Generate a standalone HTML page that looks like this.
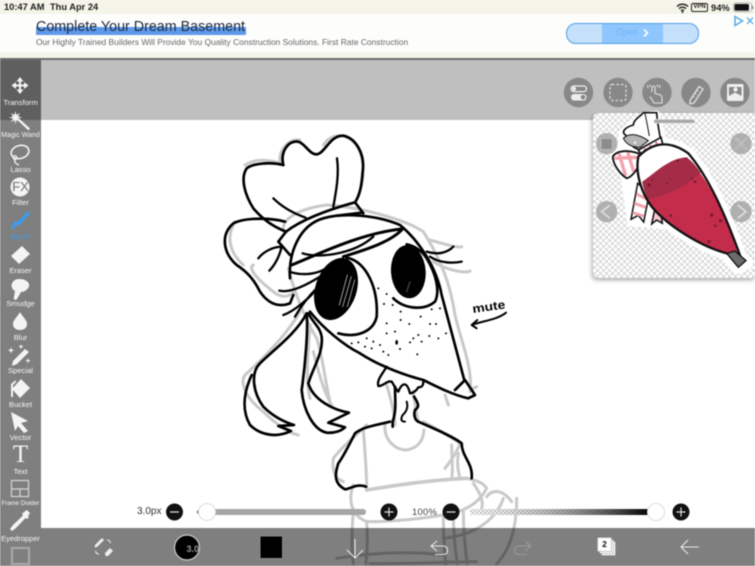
<!DOCTYPE html>
<html><head><meta charset="utf-8">
<style>
html,body{margin:0;padding:0;width:755px;height:566px;overflow:hidden;background:#fff;font-family:"Liberation Sans",sans-serif}
.a{position:absolute}
#root{position:absolute;left:0;top:0;width:755px;height:566px;overflow:hidden;filter:blur(.45px)}
.lb{position:absolute;left:0;width:41px;text-align:center;color:#f4f4f4;font-size:7.6px;line-height:9px;white-space:nowrap}
.check{background-color:#fff;background-image:conic-gradient(#dcdcdc 25%,#fff 0 50%,#dcdcdc 0 75%,#fff 0);background-size:6px 6px}
</style></head><body>
<div id="root">
<!-- status -->
<div class="a" style="left:0;top:0;width:755px;height:14px;background:#f4f4e8"></div>
<div class="a" style="left:4px;top:2px;font-size:9.300px;line-height:11px;color:#222;font-weight:bold;white-space:nowrap">10:47 AM</div>
<div class="a" style="left:50px;top:2px;font-size:9.300px;line-height:11px;color:#222;font-weight:bold;white-space:nowrap">Thu Apr 24</div>
<div class="a" style="left:711px;top:2px;font-size:9.400px;line-height:11px;color:#222;font-weight:bold">94%</div>
<div class="a" style="left:691px;top:3px;width:15px;height:7px;border:1px solid #222;border-radius:2px;font-size:6px;line-height:7px;text-align:center;color:#222;font-weight:bold">VPN</div>
<svg class="a" style="left:676px;top:2px" width="79" height="12" viewBox="0 0 79 12">
<path d="M1 4.500C4 1.500 9 1.500 12 4.500M3 6.600C5 4.700 8 4.700 10 6.600M5 8.600C6 7.700 7 7.700 8 8.600" stroke="#222" stroke-width="1.400" fill="none"/><circle cx="6.500" cy="10" r="1" fill="#222"/>
<rect x="57.500" y="1" width="18" height="8.600" rx="2.400" fill="#fff" stroke="#999" stroke-width=".8"/><rect x="58.500" y="2" width="14.500" height="6.600" rx="1.400" fill="#111"/><rect x="76" y="4" width="1.200" height="3" fill="#888"/>
</svg>
<!-- ad -->
<div class="a" style="left:0;top:14px;width:755px;height:38px;background:#fdfdfc"></div>
<div class="a" style="left:0;top:52px;width:755px;height:6px;background:#f4f4e8"></div>
<div class="a" style="left:0;top:58px;width:755px;height:2px;background:#6b6b6b"></div>
<div class="a" style="left:36px;top:27px;width:210px;height:8px;background:#5f98ea"></div>
<div class="a" style="left:36px;top:19px;font-size:14.300px;line-height:17px;color:#1d2a3c;white-space:nowrap">Complete Your Dream Basement</div>
<div class="a" style="left:36px;top:37px;font-size:8.430px;line-height:11px;color:#666;white-space:nowrap">Our Highly Trained Builders Will Provide You Quality Construction Solutions. First Rate Construction</div>
<div class="a" style="left:566px;top:23px;width:131px;height:19px;border:1px solid #4f9fe8;border-radius:10px;background:#c4e0fb"></div>
<div class="a" style="left:602px;top:24px;width:61px;height:19px;background:#8ec6fd"></div>
<div class="a" style="left:616px;top:27px;font-size:9px;line-height:11px;color:#70b4fb">Open</div>
<svg class="a" style="left:642px;top:28px" width="8" height="10"><path d="M2 1.500L5.500 5L2 8.500" stroke="#fff" stroke-width="1.600" fill="none"/></svg>
<svg class="a" style="left:733px;top:14px" width="22" height="14"><path d="M2 2.500L2 11.500L9.500 7Z" fill="none" stroke="#59aeea" stroke-width="1.600"/><path d="M14 3.500L20 10M20 3.500L14 10" stroke="#4ca4e4" stroke-width="1.200"/></svg>
<!-- canvas -->
<div class="a" style="left:0;top:60px;width:755px;height:60px;background:#bfbfbf"></div>
<svg class="a" style="left:0;top:0" width="755" height="566" viewBox="0 0 755 566">
<g transform="translate(210,125) scale(.33333)" fill="none" stroke-linecap="round" stroke-linejoin="round">
<!-- gray sketch -->
<g stroke="#c9c9c9" stroke-width="9">
<path d="M210 115C205 70 240 40 270 45M340 60C360 30 400 20 430 50C470 90 465 170 440 225"/>
<path d="M105 120C140 100 170 105 205 112"/>
<path d="M220 310C220 280 270 250 350 240C440 245 580 280 640 320C690 400 720 470 735 570C750 640 790 730 780 800"/>
<path d="M75 290C50 330 55 380 100 420M130 420C110 430 150 470 190 500C220 525 245 510 250 500"/>
<path d="M660 345C710 360 750 370 755 365M670 410C720 440 770 445 780 438"/>
<path d="M235 430C255 510 290 590 320 640C340 700 345 770 360 830"/>
<path d="M270 560C230 630 160 700 105 750C85 780 120 830 160 860C200 900 240 925 265 930"/>
<path d="M300 600C295 680 285 760 300 820"/>
<path d="M310 680C320 720 340 800 365 840"/>
<path d="M705 810L715 840M790 790L800 785"/>
<path d="M530 780C545 830 555 870 555 900M610 800C615 840 620 870 625 890"/>
<path d="M525 895C520 950 560 975 590 975C620 970 640 950 642 915"/>
<path d="M470 900C440 930 400 960 370 1000C365 1040 375 1060 400 1070"/>
<path d="M460 915C465 980 470 1040 470 1090"/>
<path d="M640 890C680 910 720 935 750 955C740 985 720 1010 705 1030M725 960C725 1000 730 1040 725 1060M745 985C740 1020 745 1040 750 1060"/>
<path d="M470 1095C560 1080 660 1065 770 1060" stroke-width="11"/>
<path d="M430 1080C415 1120 420 1170 470 1190C560 1190 640 1180 700 1170C770 1160 810 1130 830 1090C820 1070 790 1065 770 1060"/>
<path d="M790 1075C815 1110 820 1135 815 1150M830 1115C850 1090 880 1095 905 1130"/>
<path d="M430 1160C425 1220 425 1280 430 1316M470 1190C475 1250 470 1290 468 1316"/>
<path d="M700 1170C700 1250 705 1290 707 1316M730 1160C730 1240 738 1290 742 1316M760 1155C760 1240 768 1290 772 1316"/>
<path d="M700 1240C800 1230 860 1180 880 1120M920 1120C920 1200 905 1270 860 1316"/>
<path d="M380 1300C500 1280 620 1280 700 1290M800 1310C720 1310 620 1316 480 1316"/>
</g>
<!-- black lines -->
<g stroke="#000" stroke-width="8">
<path d="M220 120C180 110 130 115 110 130C90 160 105 210 130 250C160 285 190 305 228 320"/>
<path d="M220 120C210 80 235 45 265 50C285 55 300 90 320 88C345 85 360 30 400 32C440 40 465 90 458 140C455 180 450 210 435 232"/>
<path d="M381 100C388 150 378 200 370 245" stroke-width="7"/>
<path d="M190 220C215 245 250 265 287 278" stroke-width="7"/>
<path d="M205 350L228 320C280 280 370 250 435 232L460 265M205 350L240 390"/>
<path d="M380 272L455 263"/>
<path d="M240 460C235 380 270 300 340 280C400 262 500 270 570 300C630 350 680 430 695 510L762 762"/>
<path d="M245 420C320 390 450 325 575 312" stroke-width="9"/>
<path d="M278 385C320 400 430 390 490 335" stroke-width="7"/>
<path d="M575 315C540 350 480 370 400 395" stroke-width="9"/>
<path d="M245 442C280 452 320 447 345 432" stroke-width="7"/>
<path d="M410 398C470 410 505 490 500 575C490 620 440 640 385 625"/>
<path d="M550 520C580 550 640 560 675 530C690 500 680 450 650 400C635 375 610 362 590 358"/>
<path d="M650 380C680 390 710 385 730 365M660 395C690 415 730 415 755 410" stroke-width="7"/>
<path d="M208 497C240 505 290 480 330 455M220 570C250 560 300 520 330 480M255 575C275 540 300 510 320 490" stroke-width="7"/>
<path d="M225 290C190 280 110 275 70 295C30 330 40 385 80 420C110 440 130 460 150 500C170 530 200 550 240 535L250 510"/>
<path d="M145 400C160 380 190 365 215 365M178 437C195 420 210 390 215 365" stroke-width="7"/>
<path d="M290 565C260 625 190 675 150 715C120 745 130 805 160 845C190 875 220 890 252 900L205 903L243 918C200 940 150 930 120 900C100 865 95 815 125 750"/>
<path d="M290 565C295 615 285 725 275 795C280 855 310 915 350 923C375 925 395 917 405 907L355 893L417 863C370 855 310 825 295 775C310 725 340 685 335 635C330 605 310 595 295 565"/>
<path d="M300 560C340 610 400 660 450 685C520 730 600 755 640 765C680 785 730 810 775 820L795 810L765 765L735 795"/>
<path d="M530 725C515 750 500 765 505 783C520 785 530 765 545 770C555 785 555 790 565 800C575 775 590 765 600 805C610 805 620 795 625 787C635 787 640 783 640 770" stroke-width="7"/>
<path d="M555 785C555 825 560 855 548 890L548 905"/>
<path d="M612 815C625 835 630 845 615 855C610 870 615 885 625 890"/>
<path d="M590 830C595 845 590 860 578 870C570 885 575 890 585 890" stroke-width="6"/>
<path d="M540 890C500 900 460 905 435 925C420 955 400 995 385 1015C375 1045 370 1075 405 1093C425 1090 440 1075 468 1085"/>
<path d="M625 890C670 910 730 935 755 955C755 995 790 1015 785 1060"/>
<path d="M888 563C860 585 820 587 785 600L800 610M785 600L802 585" stroke-width="6"/>
<ellipse cx="378" cy="492" rx="62" ry="96" transform="rotate(18 378 492)" fill="#000" stroke="none"/>
<ellipse cx="595" cy="440" rx="52" ry="80" transform="rotate(-4 595 440)" fill="#000" stroke="none"/>
<path d="M412 450L388 540M424 455L398 545M434 465L412 545" stroke="#9a9a9a" stroke-width="3"/>
<path d="M600 470L590 500" stroke="#555" stroke-width="3"/>
</g>
<g fill="#000" stroke="none">
<circle cx="505" cy="490" r="3"/><circle cx="530" cy="507" r="3"/><circle cx="522" cy="537" r="3"/><circle cx="548" cy="540" r="3"/><circle cx="572" cy="560" r="3"/><circle cx="530" cy="595" r="3"/><circle cx="572" cy="585" r="3"/><circle cx="598" cy="597" r="3"/><circle cx="632" cy="575" r="3"/><circle cx="660" cy="597" r="3"/><circle cx="678" cy="597" r="3"/><circle cx="708" cy="625" r="3"/><circle cx="555" cy="620" r="3"/><circle cx="530" cy="625" r="3"/><circle cx="625" cy="630" r="3"/><circle cx="658" cy="633" r="3"/><circle cx="685" cy="640" r="3"/><circle cx="610" cy="640" r="3"/><ellipse cx="560" cy="652" rx="4" ry="7"/><circle cx="600" cy="652" r="3"/><circle cx="635" cy="650" r="3"/><circle cx="510" cy="660" r="3"/><circle cx="490" cy="650" r="3"/><circle cx="470" cy="640" r="3"/><circle cx="425" cy="655" r="3"/><circle cx="445" cy="652" r="3"/><circle cx="465" cy="665" r="3"/><circle cx="485" cy="670" r="3"/><circle cx="520" cy="680" r="3"/><circle cx="570" cy="672" r="3"/><circle cx="535" cy="690" r="3"/><circle cx="622" cy="688" r="3"/><circle cx="690" cy="550" r="3"/><circle cx="665" cy="553" r="3"/>
</g>
</g>
<text x="473" y="313" transform="rotate(-8 473 313)" font-family="Liberation Sans,sans-serif" font-weight="bold" font-size="12" fill="#000" textLength="33" lengthAdjust="spacingAndGlyphs">mute</text>
</svg>
<!-- sliders -->
<div class="a" style="left:137px;top:506px;font-size:10px;line-height:12px;color:#333">3.0px</div>
<div class="a" style="left:412px;top:506px;font-size:9.400px;line-height:12px;color:#444;letter-spacing:.3px">100%</div>
<svg class="a" style="left:0;top:500px" width="755" height="24">
<defs><linearGradient id="g1" x1="0" x2="1"><stop offset="0" stop-color="#fff" stop-opacity=".3"/><stop offset="1" stop-color="#000"/></linearGradient>
<pattern id="ck" width="4" height="4" patternUnits="userSpaceOnUse"><rect width="4" height="4" fill="#fff"/><rect width="2" height="2" fill="#aaa"/><rect x="2" y="2" width="2" height="2" fill="#aaa"/></pattern></defs>
<rect x="210" y="9" width="156" height="6" rx="3" fill="#a6a6a6"/>
<rect x="197" y="10" width="6" height="4" rx="2" fill="#2a5a78"/>
<rect x="470" y="9" width="180" height="6" fill="url(#ck)"/><rect x="470" y="9" width="180" height="6" fill="url(#g1)"/>
<circle cx="207" cy="12" r="8.500" fill="#fff" stroke="#ddd"/>
<circle cx="656" cy="12" r="8.500" fill="#fff" stroke="#ddd"/>
<g fill="#111"><circle cx="174.500" cy="12" r="8.500"/><circle cx="389" cy="12" r="8.500"/><circle cx="451" cy="12" r="8.500"/><circle cx="681" cy="12" r="8.500"/></g>
<path d="M170 12h9M446.500 12h9M384.500 12h9M389 7.500v9M676.500 12h9M681 7.500v9" stroke="#ddd" stroke-width="1.200"/>
</svg>
<!-- thumbnail panel -->
<div class="a check" style="left:593px;top:113px;width:162px;height:165px;border-radius:5px 0 0 5px;box-shadow:-1px 2px 4px rgba(0,0,0,.35)"></div>
<svg class="a" style="left:555px;top:70px" width="200" height="215" viewBox="0 0 600 645">
<!-- halo -->
<path d="M250 260C300 210 350 215 400 250C460 320 510 430 560 570L575 580L545 592L515 550C440 530 340 470 290 410C260 370 240 310 250 260Z" fill="#fff" stroke="#fff" stroke-width="38" stroke-linejoin="round"/>
<path d="M200 185C215 170 240 160 262 135L305 130L325 205L330 470L225 460L205 325L172 260L195 240Z" fill="#fff" stroke="#fff" stroke-width="16" stroke-linejoin="round"/>
<!-- top frills -->
<path d="M212 195C195 185 215 170 235 165C235 150 255 140 265 128L305 128C307 160 312 180 316 205L255 240C235 235 215 215 212 195Z" fill="#fff" stroke="#111" stroke-width="5"/>
<path d="M270 130C275 155 280 180 283 198" stroke="#111" stroke-width="3" fill="none"/>
<path d="M205 205C225 185 255 195 280 212L255 232C235 232 215 225 205 205Z" fill="#b5b5b5" stroke="#111" stroke-width="3"/>
<circle cx="240" cy="218" r="4" fill="#eee"/>
<!-- ribbon tails -->
<path d="M248 340L228 448L250 436L266 456L283 370Z" fill="#fff" stroke="#111" stroke-width="4.500"/>
<path d="M244 372L278 388M238 400L272 412M233 428L266 438" stroke="#f4a3ae" stroke-width="9"/>
<path d="M302 405L290 462L305 450L322 460L318 430Z" fill="#f9c6cd" stroke="#111" stroke-width="4.500"/>
<!-- bow -->
<path d="M250 250C220 240 185 240 173 260C175 285 195 312 215 325C235 320 250 290 262 270Z" fill="#fff" stroke="#111" stroke-width="5"/>
<path d="M192 250L212 318M218 246L236 305M178 265L248 262" stroke="#f4a3ae" stroke-width="10" fill="none"/>
<path d="M173 260C175 285 195 312 215 325C235 320 250 290 262 270M250 250C220 240 185 240 173 260" stroke="#111" stroke-width="5" fill="none"/>
<path d="M250 240L318 202L323 222L262 258Z" fill="#fff" stroke="#111" stroke-width="5"/>
<path d="M268 235L276 250M285 225L293 240M302 215L310 230" stroke="#ee8092" stroke-width="7"/>
<!-- bag -->
<path d="M250 260C300 210 350 215 400 250C460 320 510 430 560 570L515 550C440 530 340 470 290 410C260 370 240 310 250 260Z" fill="#fff"/>
<path d="M262 335C300 310 340 265 395 262C460 325 510 430 552 560L518 548C440 530 340 470 290 410C275 385 265 360 262 335Z" fill="#c32c4a"/>
<path d="M262 335C300 310 340 265 395 262C410 272 425 290 437 308C400 345 340 375 278 388C270 370 265 352 262 335Z" fill="#a42c47"/>
<path d="M250 260C300 210 350 215 400 250C460 320 510 430 560 570L515 550C440 530 340 470 290 410C260 370 240 310 250 260Z" fill="none" stroke="#111" stroke-width="7"/>
<path d="M515 550L540 543L573 572L550 592Z" fill="#6b6b6b" stroke="#111" stroke-width="4"/>
<g fill="#7a1a30"><circle cx="282" cy="345" r="5"/><circle cx="292" cy="330" r="3"/><circle cx="337" cy="340" r="3"/><circle cx="345" cy="327" r="2"/><circle cx="368" cy="273" r="4"/><circle cx="393" cy="265" r="3"/><circle cx="420" cy="335" r="4"/><circle cx="410" cy="325" r="3"/><circle cx="470" cy="435" r="5"/><circle cx="497" cy="452" r="5"/><circle cx="481" cy="467" r="4"/><circle cx="462" cy="515" r="5"/><circle cx="347" cy="437" r="4"/><circle cx="483" cy="537" r="2"/></g>
<!-- overlays -->
<rect x="296" y="148" width="124" height="12" rx="6" fill="#a9a9a9" stroke="#eee" stroke-width="2"/>
<g fill="#a5a5a5" fill-opacity=".85"><circle cx="155" cy="221" r="32"/><circle cx="558" cy="221" r="32"/><circle cx="155" cy="425" r="32"/><circle cx="558" cy="425" r="32"/></g>
<rect x="138" y="205" width="34" height="34" fill="#8d8d8d" stroke="#bdbdbd" stroke-width="3"/>
<path d="M540 203L576 239M576 203L540 239" stroke="#c9c9c9" stroke-width="3"/>
<path d="M165 405L140 425L165 445" fill="none" stroke="#ddd" stroke-width="5"/>
<path d="M548 405L573 425L548 445" fill="none" stroke="#ddd" stroke-width="5"/>
</svg>
<!-- top right buttons -->
<svg class="a" style="left:560px;top:75px" width="195" height="36" viewBox="560 75 195 36" fill="none">
<g fill="#888"><circle cx="578.500" cy="92.500" r="14.700"/><circle cx="618" cy="92.500" r="14.700"/><circle cx="657" cy="92.500" r="14.700"/><circle cx="696" cy="92.500" r="14.700"/><circle cx="735" cy="92.500" r="14.700"/></g>
<rect x="571" y="86" width="15.500" height="5.600" rx="2.800" stroke="#eee" stroke-width="1.200"/>
<circle cx="574" cy="88.800" r="2" fill="#eee"/>
<rect x="571" y="94" width="15.500" height="6.500" rx="3.200" fill="#eee"/>
<circle cx="583" cy="97.200" r="2.300" fill="#888"/>
<rect x="610" y="84.500" width="16" height="16" rx="2" stroke="#ddd" stroke-width="1.300" stroke-dasharray="2.500 2"/>
<path d="M652 92V87.500a1.500 1.500 0 0 1 3 0V93.500L659 94.500Q662 95.500 662 98V103H654L650 96.500" stroke="#e4e4e4" stroke-width="1.100"/>
<path d="M650 84.500L650 87M647.500 85L648 88M657.500 84.500L657.500 87M660 85L659.500 88" stroke="#e4e4e4"/>
<path d="M690 100.500L699 86.500L703 89L694 103L690 104Z" stroke="#e8e8e8" stroke-width="1.200"/>
<path d="M693 96.500l1.500 1M695 93.500l1.500 1M697 90.500l1.500 1" stroke="#e8e8e8" stroke-width=".8"/>
<rect x="727" y="84" width="16.500" height="17" rx="1.500" fill="#eee"/>
<path d="M729 87H741.500V96L735 92.500L729 96Z" fill="#888"/>
<circle cx="735.500" cy="89.500" r="2.200" fill="#eee"/>
</svg>
<!-- toolbars -->
<div class="a" style="left:0;top:60px;width:41px;height:506px;background:rgba(0,0,0,.5)"></div>
<div class="a" style="left:41px;top:528px;width:714px;height:38px;background:rgba(0,0,0,.5)"></div>
<!-- sidebar icons -->
<svg class="a" style="left:0;top:60px" width="41" height="506" viewBox="0 60 41 506">
<g fill="#f4f4f4">
<path d="M20 77L23.500 81.500H21V84.500H24V82L28.500 85.500L24 89V86.500H21V89.500H23.500L20 94L16.500 89.500H19V86.500H16V89L11.500 85.500L16 82V84.500H19V81.500H16.500Z"/>
<path d="M15.500 111L16.500 115L20 113L18 116.500L22 117.500L18 118.500L20 122L16.500 120L15.500 124L14.500 120L11 122L13 118.500L9 117.500L13 116.500L11 113L14.500 115Z"/>
<path d="M19 118.500L30 128.500L28.500 130.500L17.500 120Z"/>
<circle cx="20" cy="187" r="9.500"/>
<path d="M28 211L30 213.500L20 225L15 226C15 229 12 230 10.500 228C13 227 12 223 15 221L18 221.500Z" fill="#3f9aea"/>
<path d="M22 246L30 254L19 264L11 256Z"/>
<path d="M15 280C19 278 27 279 29 284C30 288 25 292 21 292L17 299C15 301 13 299 14 297L15 291C11 289 10 283 15 280Z"/>
<path d="M20 312C22 316 27 320 27 324C27 328 24 330 20 330C16 330 13 328 13 324C13 320 18 316 20 312Z"/>
<path d="M25 349L29 352L17 364L12 366L13 361Z"/>
<path d="M11 347l.8 2.500 2.500.8-2.500.8-.8 2.500-.8-2.500-2.500-.8 2.500-.8zM21 344l.7 2 2 .7-2 .7-.7 2-.7-2-2-.7 2-.7zM28 358l.7 2 2 .7-2 .7-.7 2-.7-2-2-.7 2-.7z"/>
<path d="M21 379L30 388L20 398L12 389Z"/>
<path d="M11 384L16 380V382L13 385V397H11Z"/>
<path d="M11 412L28 421L21 423L28 431L24 433L18 426L15 431Z"/>
<path d="M24 512L27 510L30 513L28 516L29 517L27 519L25.500 518L16 528L12 531L10 529L13 525L23 515.500L22 514Z"/>
</g>
<g fill="none" stroke="#f4f4f4">
<ellipse cx="20" cy="152" rx="9" ry="6.500" stroke-width="1.600" transform="rotate(-15 20 152)"/>
<circle cx="15" cy="157.500" r="1.800" stroke-width="1.200"/>
<path d="M15 159C14 162 16 164 19 165" stroke-width="1.300"/>
<rect x="11.500" y="480.500" width="17" height="16" stroke="#d5d5d5" stroke-width="1.200"/>
<path d="M11.500 489H28.500M20 489V496.500" stroke="#d5d5d5" stroke-width="1.200"/>
<rect x="12" y="548" width="17" height="16" stroke="#aaa" stroke-width="2"/>
</g>
</svg>
<div class="a" style="left:0;top:178px;width:41px;text-align:center;font-size:13px;line-height:18px;color:#707070">FX</div>
<div class="a" style="left:0;top:442px;width:41px;text-align:center;font-family:'Liberation Serif',serif;font-size:25px;line-height:26px;color:#f4f4f4">T</div>
<div class="lb" style="top:98px">Transform</div>
<div class="lb" style="top:131px;font-size:7px">Magic Wand</div>
<div class="lb" style="top:165px">Lasso</div>
<div class="lb" style="top:198px">Filter</div>
<div class="lb" style="top:232px;color:#3f9aea">Brush</div>
<div class="lb" style="top:266px">Eraser</div>
<div class="lb" style="top:299px">Smudge</div>
<div class="lb" style="top:333px">Blur</div>
<div class="lb" style="top:366px">Special</div>
<div class="lb" style="top:400px">Bucket</div>
<div class="lb" style="top:433px">Vector</div>
<div class="lb" style="top:467px">Text</div>
<div class="lb" style="top:500px;font-size:6px">Frame Divider</div>
<div class="lb" style="top:534px;font-size:7.500px">Eyedropper</div>
<!-- bottom icons -->
<svg class="a" style="left:41px;top:528px" width="714" height="38" viewBox="41 528 714 38" fill="none">
<path d="M95 545L102 538L104 540L97 547L94.500 547.500Z" fill="#eee"/>
<path d="M105 553L110 548L113 551L108 556L105.500 556Z" fill="#eee"/>
<path d="M107 540Q110 540 110.500 543M99 554Q96 554 95.500 551" stroke="#eee"/>
<circle cx="187" cy="547.500" r="12.500" fill="#000" stroke="#ccc" stroke-width="1.200"/>
<rect x="260" y="536" width="22.500" height="22.500" fill="#000" stroke="#888" stroke-width="1"/>
<path d="M355 539V558M347 550L355 558L363 550" stroke="#e8e8e8" stroke-width="1.100"/>
<path d="M437 541L431 546L437 551M431 546H443Q447.500 546 447.500 551Q447.500 554.500 443 554.500H435" stroke="#e6e6e6" stroke-width="1.100"/>
<path d="M525 541L531 546L525 551M531 546H519Q514.500 546 514.500 551Q514.500 554.500 519 554.500H527" stroke="#9a9a9a" stroke-width="1.100"/>
<rect x="601.500" y="541.500" width="14" height="14" fill="#fff" stroke="#888" stroke-width=".5"/>
<rect x="599.500" y="539.500" width="14" height="14" fill="#fff" stroke="#888" stroke-width=".5"/>
<rect x="597.500" y="537.500" width="14" height="14" fill="#fff" stroke="#888" stroke-width=".5"/>
<path d="M699 547H681M688 540L681 547L688 554" stroke="#e8e8e8" stroke-width="1.100"/>
</svg>
<div class="a" style="left:175px;top:544px;width:24px;text-align:right;font-size:9px;font-weight:bold;line-height:11px;color:#999">3.0</div>
<div class="a" style="left:597px;top:539px;width:15px;text-align:center;font-size:8.500px;font-weight:bold;line-height:11px;color:#111">2</div>
</div>
</body></html>
